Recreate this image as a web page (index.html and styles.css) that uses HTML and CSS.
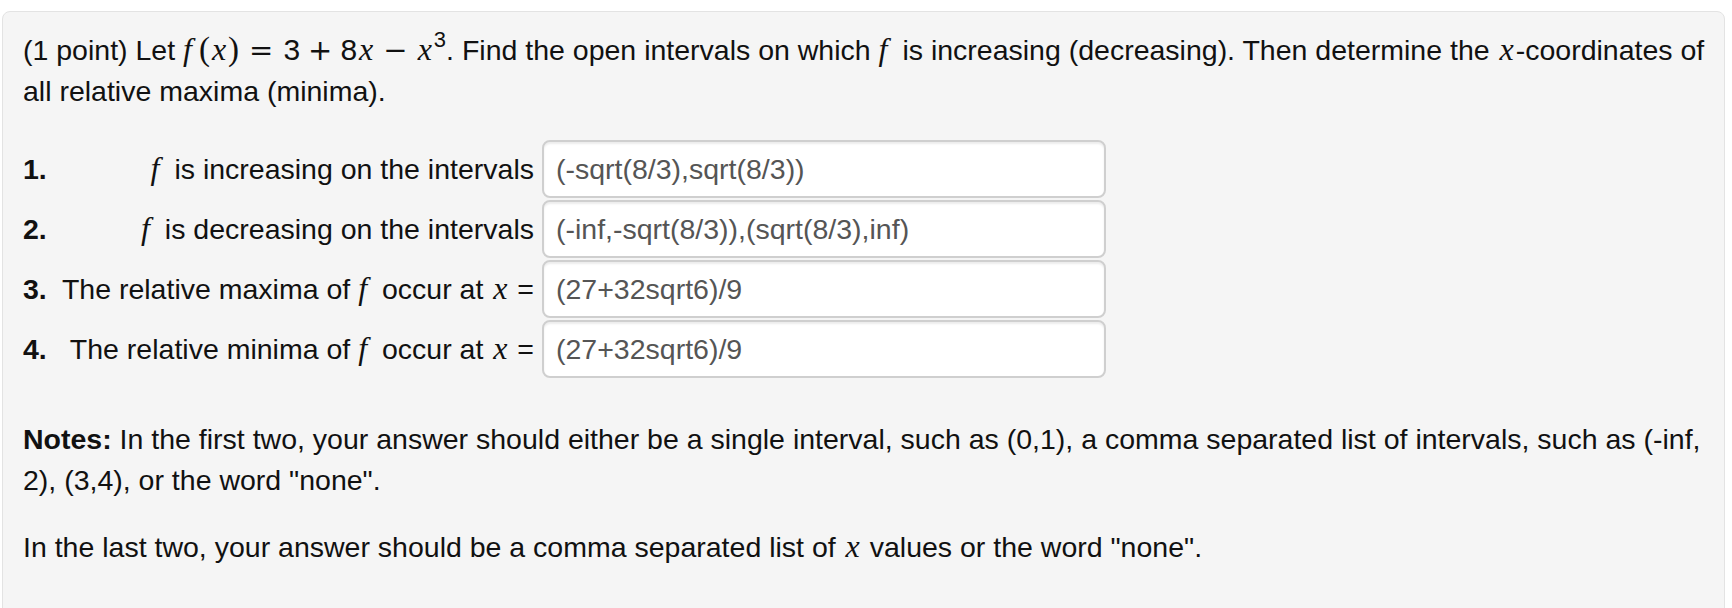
FILE: index.html
```html
<!DOCTYPE html>
<html>
<head>
<meta charset="utf-8">
<link rel="stylesheet" href="styles.css">
</head>
<body>
<div class="problem">
  <p class="intro">(1 point) Let <span class="math"><i class="mi f">f</i><span class="paren">(</span><i class="mi x">x</i><span class="paren">)</span><span class="mo rel">=</span><span class="mn">3</span><span class="mo">+</span><span class="mn">8</span><i class="mi x">x</i><span class="mo">−</span><i class="mi x">x</i><sup class="mn sup">3</sup></span>. Find the open intervals on which <i class="mi f">f</i> is increasing (decreasing). Then determine the <i class="mi x">x</i>-coordinates of all relative maxima (minima).</p>

  <div class="answers">
    <b class="num">1.</b>
    <span class="label"><i class="mi f">f</i> is increasing on the intervals</span>
    <input class="ans" type="text" value="(-sqrt(8/3),sqrt(8/3))">

    <b class="num">2.</b>
    <span class="label"><i class="mi f">f</i> is decreasing on the intervals</span>
    <input class="ans" type="text" value="(-inf,-sqrt(8/3)),(sqrt(8/3),inf)">

    <b class="num">3.</b>
    <span class="label">The relative maxima of <i class="mi f">f</i> occur at <i class="mi x">x</i> =</span>
    <input class="ans" type="text" value="(27+32sqrt6)/9">

    <b class="num">4.</b>
    <span class="label">The relative minima of <i class="mi f">f</i> occur at <i class="mi x">x</i> =</span>
    <input class="ans" type="text" value="(27+32sqrt6)/9">
  </div>

  <p class="notes"><b>Notes:</b> In the first two, your answer should either be a single interval, such as (0,1), a comma separated list of intervals, such as (-inf, 2), (3,4), or the word "none".</p>
  <p class="last">In the last two, your answer should be a comma separated list of <i class="mi x">x</i> values or the word "none".</p>
</div>
</body>
</html>
```

FILE: styles.css
```css
html, body {
  margin: 0;
  padding: 0;
  background: #ffffff;
}

body {
  font-family: "Liberation Sans", Arial, Helvetica, sans-serif;
  font-size: 28.5px;
  line-height: 40.7px;
  color: #111111;
}

.problem {
  margin: 11px 7px 0 2px;
  padding: 18px 16px 80px 20px;
  background: #f5f5f5;
  border: 1px solid #e3e3e3;
  border-radius: 8px;
}

.problem p {
  margin: 0;
}

.math,
.math * {
  line-height: 0;
}

.mi {
  font-family: "Liberation Serif", "Times New Roman", serif;
  font-style: italic;
  font-size: 32px;
  line-height: 0;
}

.mi.f {
  margin-right: 7px;
}

.mi.x {
  padding: 0 2px;
}

.math .paren {
  font-family: "Liberation Serif", "Times New Roman", serif;
  font-size: 33px;
}

.math .mo {
  font-family: "DejaVu Sans", sans-serif;
  font-size: 29px;
  margin: 0 8px;
}

.math .mo.rel {
  margin: 0 10px;
}

.math .mn {
  font-size: 30px;
}

.math .sup {
  font-size: 22px;
  vertical-align: 13px;
}

.answers {
  display: grid;
  grid-template-columns: 39px 480px 564px;
  align-items: center;
  row-gap: 2px;
  margin-top: 29px;
}

.num {
  font-weight: bold;
}

.label {
  justify-self: end;
  padding-right: 8px;
  white-space: nowrap;
}

.ans {
  box-sizing: border-box;
  width: 564px;
  height: 58px;
  margin: 0;
  padding: 0 12px;
  font-family: "Liberation Sans", Arial, Helvetica, sans-serif;
  font-size: 28.5px;
  color: #555555;
  background: #ffffff;
  border: 2px solid #cfcfcf;
  border-radius: 8px;
  box-shadow: inset 0 2px 2px rgba(0, 0, 0, 0.075);
  outline: none;
}

.problem .notes {
  margin-top: 41px;
}

.problem .last {
  margin-top: 26px;
}
```
